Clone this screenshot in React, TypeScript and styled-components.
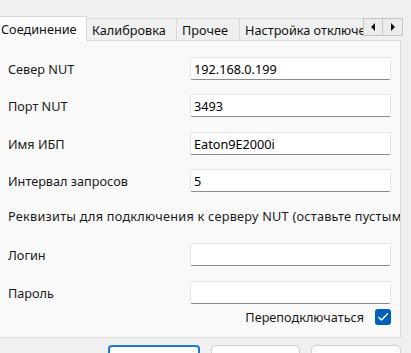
import React from "react";
import styled, { createGlobalStyle } from "styled-components";

const Global = createGlobalStyle`
  html, body { margin: 0; padding: 0; background: #f0f0f0; }
  body { font-family: "Noto Sans", "Liberation Sans", sans-serif; font-size: 12.7px; color: #1a1a1a; }
  * { box-sizing: border-box; }
`;

const Window = styled.div`
  width: 411px;
  height: 353px;
  overflow: hidden;
  padding-top: 16px;
  display: flex;
  flex-direction: column;
  background: #f0f0f0;
`;

const TabStrip = styled.div`
  display: flex;
  flex-shrink: 0;
  width: 403px;
  height: 25px;
  align-items: flex-start;
`;

const Tabs = styled.div`
  display: flex;
  flex: 1;
  overflow: hidden;
  height: 25px;
  align-items: flex-start;
`;

const Tab = styled.div<{ $active?: boolean; $w: number }>`
  flex: 0 0 ${(p) => p.$w}px;
  height: ${(p) => (p.$active ? 25 : 23)}px;
  margin-top: ${(p) => (p.$active ? 0 : 2)}px;
  padding-left: ${(p) => (p.$active ? 1 : 5)}px;
  display: flex;
  align-items: center;
  white-space: nowrap;
  overflow: hidden;
  background: ${(p) => (p.$active ? "#fcfcfc" : "#f0f0f0")};
  border: 1px solid #dadada;
  border-left: ${(p) => (p.$active ? "none" : "1px solid #dadada")};
  border-bottom: ${(p) => (p.$active ? "none" : "1px solid #dadada")};
  margin-left: ${(p) => (p.$active ? 0 : -1)}px;
  color: #111;
  position: relative;
  z-index: ${(p) => (p.$active ? 1 : 0)};
`;

const Arrows = styled.div`
  display: flex;
  margin-top: 2px;
  height: 18px;
  border: 1px solid #c4c4c4;
  background: #ececec;
`;

const ArrowBtn = styled.div<{ $first?: boolean }>`
  width: 19px;
  height: 16px;
  display: flex;
  align-items: center;
  justify-content: center;
  border-right: ${(p) => (p.$first ? "1px solid #c4c4c4" : "none")};
`;

const Panel = styled.div`
  flex-shrink: 0;
  width: 401px;
  height: 298px;
  margin-top: -1px;
  background: #f9f9f9;
  border: 1px solid #dadada;
  border-left: none;
  overflow: hidden;
  padding: 16px 9px 0 8px;
  display: flex;
  flex-direction: column;
`;

const Row = styled.div<{ $mt?: number }>`
  display: grid;
  flex-shrink: 0;
  grid-template-columns: 182px 201px;
  align-items: center;
  height: 23px;
  margin-top: ${(p) => p.$mt ?? 0}px;
`;

const Label = styled.div`
  white-space: nowrap;
  color: #1a1a1a;
`;

const Input = styled.div`
  height: 23px;
  background: #fff;
  border: 1px solid #e6e6e6;
  border-bottom: 1px solid #8c8c8c;
  border-radius: 2px;
  padding: 0 3px;
  display: flex;
  align-items: center;
  color: #000;
  white-space: nowrap;
`;

const Note = styled.div`
  flex-shrink: 0;
  margin-top: 16px;
  height: 16px;
  line-height: 16px;
  white-space: nowrap;
  letter-spacing: 0.25px;
`;

const CheckRow = styled.div`
  flex-shrink: 0;
  margin-top: 5px;
  display: flex;
  justify-content: flex-end;
  align-items: center;
  gap: 11px;
  height: 16px;
`;

const Check = styled.div`
  width: 16px;
  height: 16px;
  border-radius: 3px;
  background: #005fb8;
  display: flex;
  align-items: center;
  justify-content: center;
`;

const Buttons = styled.div`
  flex-shrink: 0;
  display: flex;
  gap: 11px;
  padding-left: 108px;
  margin-top: 7px;
`;

const Button = styled.div<{ $default?: boolean; $w: number }>`
  width: ${(p) => p.$w}px;
  height: 26px;
  border-radius: 4px;
  background: #fdfdfd;
  border: ${(p) => (p.$default ? "2px solid #1d79d0" : "1px solid #d0d0d0")};
`;

export default function App() {
  return (
    <>
      <Global />
      <Window>
        <TabStrip>
          <Tabs>
            <Tab $active $w={87}>Соединение</Tab>
            <Tab $w={91}>Калибровка</Tab>
            <Tab $w={64}>Прочее</Tab>
            <Tab $w={130}>Настройка отключения</Tab>
          </Tabs>
          <Arrows>
            <ArrowBtn $first>
              <svg width="5" height="8" viewBox="0 0 5 8"><path d="M4 0 L0 4 L4 8 Z" fill="#111" /></svg>
            </ArrowBtn>
            <ArrowBtn>
              <svg width="5" height="8" viewBox="0 0 5 8"><path d="M1 0 L5 4 L1 8 Z" fill="#111" /></svg>
            </ArrowBtn>
          </Arrows>
        </TabStrip>
        <Panel>
          <Row>
            <Label>Север NUT</Label>
            <Input>192.168.0.199</Input>
          </Row>
          <Row $mt={14}>
            <Label>Порт NUT</Label>
            <Input>3493</Input>
          </Row>
          <Row $mt={15}>
            <Label>Имя ИБП</Label>
            <Input>Eaton9E2000i</Input>
          </Row>
          <Row $mt={14}>
            <Label>Интервал запросов</Label>
            <Input>5</Input>
          </Row>
          <Note>Реквизиты для подключения к серверу NUT (оставьте пустым, если не требуется)</Note>
          <Row $mt={19}>
            <Label>Логин</Label>
            <Input />
          </Row>
          <Row $mt={15}>
            <Label>Пароль</Label>
            <Input />
          </Row>
          <CheckRow>
            <span>Переподключаться</span>
            <Check>
              <svg width="12" height="10" viewBox="0 0 12 10">
                <path d="M1.5 5.2 L4.5 8 L10.5 1.8" fill="none" stroke="#fff" strokeWidth="1.4" strokeLinecap="round" strokeLinejoin="round" />
              </svg>
            </Check>
          </CheckRow>
        </Panel>
        <Buttons>
          <Button $default $w={92} />
          <Button $w={89} />
          <Button $w={90} />
        </Buttons>
      </Window>
    </>
  );
}
